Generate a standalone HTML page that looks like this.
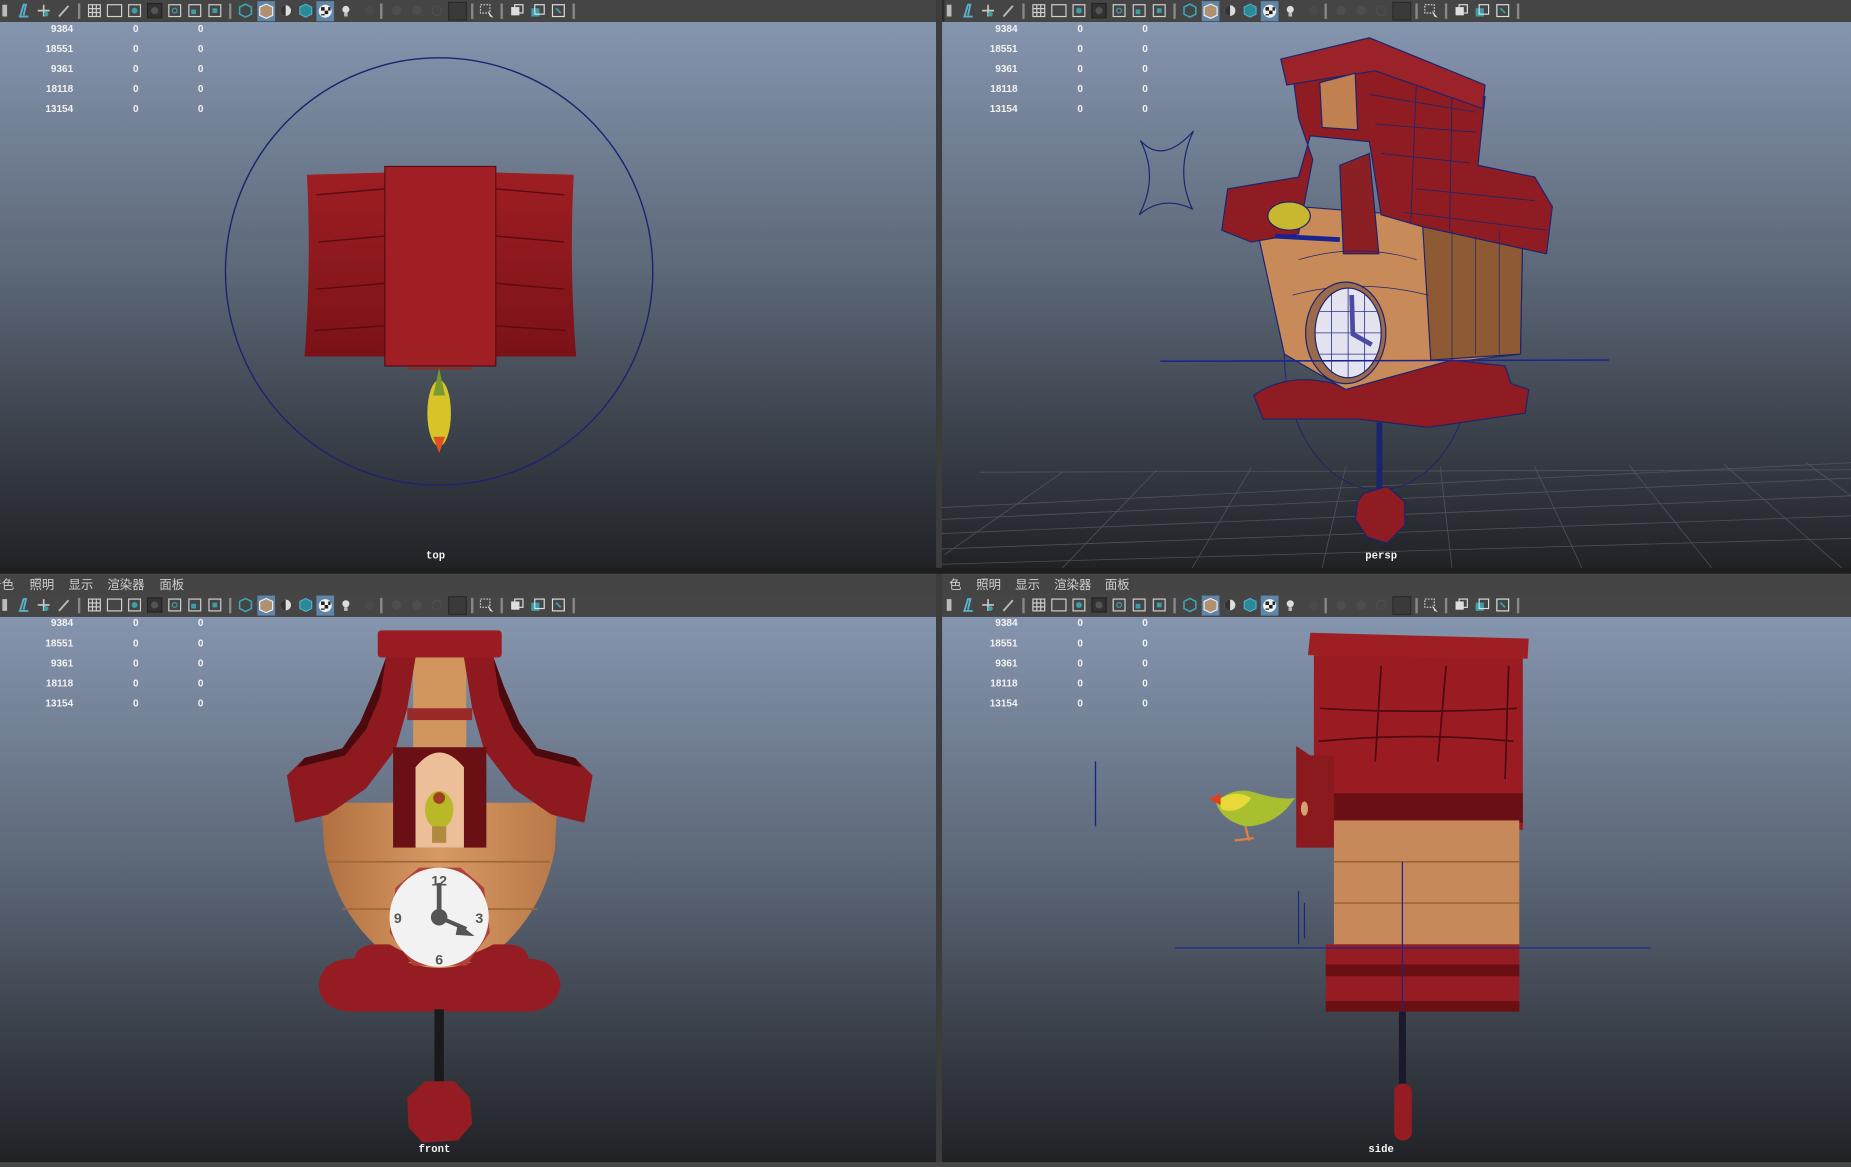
<!DOCTYPE html>
<html><head><meta charset="utf-8"><style>
html,body{margin:0;padding:0;background:#3a3a3a;overflow:hidden}
svg{display:block}
.n{font-family:"Liberation Sans",sans-serif;font-weight:bold;font-size:8.5px;fill:#f2f2f2}
.m{font-family:"Liberation Sans","Noto Sans CJK SC",sans-serif;font-size:10.5px;fill:#cfcfcf}
.lb{font-family:"Liberation Mono",monospace;font-weight:bold;font-size:9px;fill:#f4f4f4}
</style></head><body>
<svg width="1851" height="1167" viewBox="0 0 1568 988.6" preserveAspectRatio="none" xmlns="http://www.w3.org/2000/svg">
<defs>
<linearGradient id="vp" x1="0" y1="0" x2="0" y2="1">
<stop offset="0" stop-color="#8595ae"/><stop offset="0.45" stop-color="#5d6878"/><stop offset="1" stop-color="#202226"/>
</linearGradient>
<linearGradient id="wood" x1="0" y1="0" x2="1" y2="0">
<stop offset="0" stop-color="#b07040"/><stop offset="0.5" stop-color="#d89a64"/><stop offset="1" stop-color="#b87848"/>
</linearGradient>
<linearGradient id="red" x1="0" y1="0" x2="0" y2="1">
<stop offset="0" stop-color="#9e1e22"/><stop offset="1" stop-color="#7a1218"/>
</linearGradient>
<g id="tb">
<rect x="0" y="0" width="793" height="18.6" fill="#454545"/>
<rect x="2" y="4" width="4" height="10" fill="#bbb"/>
<path d="M16 14 L24 14 M17 14 L20 4 L22 4 L20 13" stroke="#5ab0c8" stroke-width="1.6" fill="none"/>
<path d="M32 9 L42 9 M37 4 L37 14" stroke="#c8c8c8" stroke-width="1.4"/><circle cx="39" cy="12" r="2" fill="#3aa0a8"/>
<path d="M50 14 L58 5" stroke="#bbb" stroke-width="1.6"/>
<rect x="66" y="3" width="2" height="13" fill="#888"/>
<g fill="none" stroke="#cfcfcf" stroke-width="1">
<rect x="75" y="4" width="10" height="10"/><path d="M78.3 4v10M81.6 4v10M75 7.3h10M75 10.6h10"/>
<rect x="91" y="4" width="12" height="10"/>
<rect x="109" y="4" width="10" height="10"/>
<rect x="143" y="4" width="10" height="10"/>
<rect x="160" y="4" width="10" height="10"/>
<rect x="177" y="4" width="10" height="10"/>
</g>
<circle cx="114" cy="9" r="2.5" fill="#3aa0a8"/>
<rect x="125" y="3" width="12" height="12" fill="#333" stroke="#222"/><circle cx="131" cy="9" r="3" fill="#555"/>
<circle cx="148" cy="9" r="2" fill="none" stroke="#3aa0a8"/>
<rect x="162" y="8" width="4" height="4" fill="#3aa0a8"/>
<rect x="180" y="7" width="4" height="4" fill="#3aa0a8"/>
<rect x="194" y="3" width="2" height="13" fill="#888"/>
<path d="M203 6 L208 3.5 L213 6 L213 12 L208 14.5 L203 12 Z" fill="none" stroke="#3aa8b8" stroke-width="1.3"/>
<rect x="218" y="1" width="15" height="17" fill="#5f86a8"/>
<path d="M220 6 L225.5 3.5 L231 6 L231 13 L225.5 15.5 L220 13 Z" fill="#b09070" stroke="#eee" stroke-width="1"/>
<circle cx="242" cy="9" r="4.5" fill="#ddd"/><path d="M242 4.5 A4.5 4.5 0 0 0 242 13.5Z" fill="#333"/>
<path d="M254 6 L259 3.5 L264 6 L264 12 L259 14.5 L254 12 Z" fill="#2a8a98" stroke="#5ac" stroke-width="1"/>
<rect x="268" y="1" width="15" height="17" fill="#5f86a8"/>
<circle cx="275.5" cy="9.5" r="5.5" fill="#eee"/><path d="M272 6h3v3h-3zM275 9h3v3h-3zM272 12h3v1h-3zM278 6h2v3h-2z" fill="#222"/>
<circle cx="293" cy="8" r="3" fill="#ddd"/><rect x="291.5" y="11" width="3" height="3" fill="#bbb"/>
<circle cx="313" cy="9" r="4" fill="#4a4a4a"/>
<rect x="322" y="3" width="2" height="13" fill="#888"/>
<circle cx="336" cy="9" r="4" fill="#4e4e4e"/><circle cx="353" cy="9" r="4" fill="#4e4e4e"/><circle cx="370" cy="9" r="4" fill="none" stroke="#4e4e4e"/>
<rect x="380" y="2" width="15" height="15" fill="#3a3a3a" stroke="#2a2a2a"/>
<rect x="399" y="3" width="2" height="13" fill="#888"/>
<rect x="407" y="4" width="8" height="7" fill="none" stroke="#ccc" stroke-dasharray="1.5 1"/><path d="M413 9 L418 15 L415 14Z" fill="#ddd"/>
<rect x="424" y="3" width="2" height="13" fill="#888"/>
<rect x="433" y="6" width="7" height="7" fill="#ddd"/><rect x="436" y="4" width="7" height="7" fill="none" stroke="#ddd"/>
<rect x="450" y="7" width="7" height="7" fill="#3aa0a8"/><rect x="453" y="4" width="8" height="8" fill="none" stroke="#ddd"/>
<rect x="468" y="4" width="10" height="10" fill="none" stroke="#ddd"/><path d="M471 7 L475 11" stroke="#3aa0a8" stroke-width="1.5"/>
<rect x="485" y="3" width="2" height="13" fill="#888"/>
</g>
<g id="nums">
<text class="n" x="62" y="27" text-anchor="end">9384</text>
<text class="n" x="62" y="44" text-anchor="end">18551</text>
<text class="n" x="62" y="61" text-anchor="end">9361</text>
<text class="n" x="62" y="78" text-anchor="end">18118</text>
<text class="n" x="62" y="95" text-anchor="end">13154</text>
<g text-anchor="middle">
<text class="n" x="115" y="27">0</text><text class="n" x="170" y="27">0</text>
<text class="n" x="115" y="44">0</text><text class="n" x="170" y="44">0</text>
<text class="n" x="115" y="61">0</text><text class="n" x="170" y="61">0</text>
<text class="n" x="115" y="78">0</text><text class="n" x="170" y="78">0</text>
<text class="n" x="115" y="95">0</text><text class="n" x="170" y="95">0</text>
</g>
</g>
</defs>

<rect width="1568" height="989" fill="#2b2b2b"/>
<rect x="0" y="18.6" width="793" height="462.4" fill="url(#vp)"/>
<rect x="798" y="18.6" width="770" height="462.4" fill="url(#vp)"/>
<rect x="0" y="522.5" width="793" height="462" fill="url(#vp)"/>
<rect x="798" y="522.5" width="770" height="462" fill="url(#vp)"/>
<rect x="793" y="0" width="5" height="989" fill="#3c3c3c"/>
<rect x="0" y="481" width="1568" height="5" fill="#1e1e1e"/>
<rect x="0" y="486" width="793" height="36.5" fill="#444"/>
<rect x="798" y="486" width="770" height="36.5" fill="#444"/>
<rect x="0" y="984.5" width="1568" height="4.1" fill="#474747"/>

<use href="#tb" x="0" y="0"/>
<use href="#tb" x="800" y="0"/>
<use href="#tb" x="0" y="503.5"/>
<use href="#tb" x="800" y="503.5"/>

<text class="m" x="-9" y="499">着色</text><text class="m" x="25" y="499">照明</text><text class="m" x="58" y="499">显示</text><text class="m" x="91" y="499">渲染器</text><text class="m" x="135" y="499">面板</text>
<text class="m" x="804" y="499">色</text><text class="m" x="827" y="499">照明</text><text class="m" x="860" y="499">显示</text><text class="m" x="893" y="499">渲染器</text><text class="m" x="936" y="499">面板</text>

<use href="#nums" x="0" y="0"/>
<use href="#nums" x="800" y="0"/>
<use href="#nums" x="0" y="503.5"/>
<use href="#nums" x="800" y="503.5"/>

<!-- TOP VIEW -->
<circle cx="372" cy="230" r="181" fill="none" stroke="#1a2470" stroke-width="1.2"/>
<path d="M260 148 L330 146 L330 302 L258 302 Q264 225 260 148Z" fill="url(#red)"/>
<path d="M416 146 L486 148 Q482 225 488 302 L416 302Z" fill="url(#red)"/>
<g stroke="#5a0c10" stroke-width="1.2" fill="none">
<path d="M268 165 L326 160 M270 205 L326 200 M268 245 L326 240 M266 280 L326 276"/>
<path d="M420 160 L478 165 M420 200 L478 205 M420 240 L478 245 M420 276 L480 280"/>
</g>
<rect x="326" y="141" width="94" height="169" fill="#a01f24" stroke="#5a0c10" stroke-width="1"/>
<path d="M345 312 L400 312" stroke="#8a3020" stroke-width="2"/>
<ellipse cx="372" cy="350" rx="10" ry="28" fill="#d8c428"/>
<path d="M367 335 L377 335 L372 312Z" fill="#7a9a30"/>
<path d="M367 370 L377 370 L372 384Z" fill="#e05020"/>
<text class="lb" x="369" y="473" text-anchor="middle">top</text>

<!-- PERSP VIEW -->
<g stroke="#555c66" stroke-width="0.7" fill="none" opacity="0.8">
<path d="M798 430 L1568 392 M798 440 L1568 405 M798 452 L1568 420 M798 465 L1568 437 M798 478 L1568 456"/>
<path d="M830 400 L1568 398 M900 400 L800 470 M980 398 L900 481 M1060 396 L1010 481 M1140 395 L1120 481 M1220 395 L1230 481 M1300 395 L1340 481 M1380 394 L1450 481 M1460 393 L1560 481 M1530 392 L1568 420"/>
</g>
<path d="M966 119 Q985 140 1011 111 Q995 145 1010 177 Q985 165 965 182 Q982 150 966 119Z" fill="none" stroke="#1a2470" stroke-width="1"/>
<ellipse cx="1168" cy="300" rx="80" ry="115" fill="none" stroke="#1a2470" stroke-width="0.8"/>
<path d="M1065 195 L1100 175 L1290 190 L1288 300 L1220 308 L1140 330 L1088 300 Z" fill="#c88a58" stroke="#1a2470" stroke-width="1"/>
<path d="M1205 188 L1290 192 L1288 300 L1212 305 Z" fill="#8e5a34" stroke="#1a2470"/>
<path d="M1095 62 L1165 50 L1258 82 L1252 140 L1300 150 L1315 175 L1310 215 L1205 192 L1170 182 L1160 120 L1110 115 L1100 150 L1040 160 L1035 195 L1060 205 L1100 198 L1112 135 L1100 100 Z" fill="#8e1c22" stroke="#1a2470" stroke-width="1"/>
<path d="M1160 80 L1250 95 M1165 105 L1250 112 M1170 130 L1245 138 M1200 160 L1300 170 M1190 180 L1310 195 M1200 65 L1195 190 M1230 80 L1228 195" stroke="#1a2470" stroke-width="0.7" fill="none"/>
<path d="M1085 50 L1160 32 L1258 72 L1256 92 L1165 60 L1090 72 Z" fill="#9a2228" stroke="#1a2470"/>
<path d="M1118 70 L1148 62 L1150 110 L1120 108 Z" fill="#c08050" stroke="#1a2470"/>
<path d="M1135 140 L1160 130 L1168 215 L1138 215 Z" fill="#8a2024" stroke="#1a2470"/>
<ellipse cx="1092" cy="183" rx="18" ry="12" fill="#c8b830" stroke="#1a2470"/>
<path d="M1080 200 L1135 203" stroke="#1a2490" stroke-width="4"/>
<g stroke="#1a2470" stroke-width="0.6" fill="none">
<path d="M1100 220 Q1150 205 1200 220 M1095 250 Q1150 235 1210 250 M1250 200 L1250 300 M1230 195 L1230 305 M1270 195 L1270 300"/>
</g>
<ellipse cx="1140" cy="282" rx="34" ry="43" fill="#9a6a4a" stroke="#1a2470"/>
<ellipse cx="1142" cy="282" rx="28" ry="38" fill="#e4e4f0" stroke="#1a2470"/>
<g stroke="#2a3090" stroke-width="0.7" fill="none"><path d="M1114 282 H1170 M1118 264 H1166 M1118 300 H1166 M1142 244 V320 M1128 248 V316 M1156 248 V316"/></g>
<path d="M1145 250 L1146 283 L1162 292" stroke="#4a4aa0" stroke-width="4" fill="none"/>
<path d="M1062 335 Q1090 315 1130 325 L1140 330 L1230 305 L1275 310 L1280 325 L1295 330 L1292 350 L1210 362 L1150 355 L1070 355 Z" fill="#8e1c22" stroke="#1a2470"/>
<path d="M983 306 L1363 305" stroke="#1a2490" stroke-width="1.3"/>
<rect x="1166" y="358" width="5" height="56" fill="#1a2470"/>
<path d="M1155 418 L1175 412 L1190 425 L1190 445 L1175 460 L1158 455 L1148 440 L1150 425Z" fill="#8e1c22" stroke="#1a2470"/>
<text class="lb" x="1170" y="473" text-anchor="middle">persp</text>

<!-- FRONT VIEW -->
<path d="M350 557 L395 557 L395 640 L350 640Z" fill="#d0965e"/>
<path d="M272 680 L472 680 L470 720 Q455 800 372 835 Q290 800 275 720 Z" fill="url(#wood)"/>
<g stroke="#a06838" stroke-width="1.5"><path d="M278 730 H466 M290 770 H455"/></g>
<path d="M327 557 L352 557 L345 600 L335 635 L310 668 L278 690 L250 697 L243 657 L258 642 L290 634 L305 612 L318 582Z" fill="#8e1a20"/>
<path d="M418 557 L393 557 L400 600 L410 635 L435 668 L467 690 L495 697 L502 657 L487 642 L455 634 L440 612 L427 582Z" fill="#8e1a20"/>
<path d="M327 557 L318 582 L305 612 L290 634 L258 642 L252 650 L292 640 L310 618 L322 590Z" fill="#4a0a0e"/>
<path d="M418 557 L427 582 L440 612 L455 634 L487 642 L493 650 L453 640 L435 618 L423 590Z" fill="#4a0a0e"/>
<rect x="320" y="534" width="105" height="23" rx="3" fill="#9a1c22"/>
<rect x="345" y="600" width="55" height="10" fill="#9a2a28"/>
<rect x="333" y="633" width="79" height="85" fill="#6a0f14"/>
<path d="M352 718 L352 650 Q372 625 393 650 L393 718Z" fill="#ecbf98"/>
<ellipse cx="372" cy="686" rx="12" ry="16" fill="#b8b828"/>
<circle cx="372" cy="676" r="5" fill="#a04020"/>
<rect x="366" y="700" width="12" height="14" fill="#b08a40"/>
<path d="M270 835 Q272 812 300 812 L325 805 Q372 835 420 805 L445 812 Q472 812 475 835 Q470 857 445 857 L300 857 Q272 857 270 835 Z" fill="#951c22"/>
<path d="M300 815 Q300 800 320 800 L330 800 Q372 825 418 800 L428 800 Q448 800 448 815Z" fill="#951c22"/>
<path d="M335 752 L355 735 L390 735 L410 752 L415 790 L395 818 L350 818 L330 790Z" fill="#b0403a"/>
<circle cx="372" cy="777" r="42" fill="#f2f2f2"/>
<g fill="#555" font-family="Liberation Sans,sans-serif" font-weight="bold" font-size="12" text-anchor="middle">
<text x="372" y="750">12</text><text x="406" y="782">3</text><text x="372" y="817">6</text><text x="337" y="782">9</text>
</g>
<path d="M370 748 L374 748 L374 777 L370 777Z" fill="#555"/>
<path d="M372 777 L395 787" stroke="#555" stroke-width="3.5"/><path d="M388 782 L402 793 L386 792Z" fill="#555"/>
<circle cx="372" cy="777" r="7" fill="#555"/>
<rect x="368" y="855" width="8" height="65" fill="#1a1a1a"/>
<path d="M360 916 L385 916 L398 930 L400 952 L388 966 L358 968 L346 955 L345 930Z" fill="#951c22"/>
<text class="lb" x="368" y="976" text-anchor="middle">front</text>

<!-- SIDE VIEW -->
<path d="M928 645 L928 700" stroke="#1a2490" stroke-width="1.2"/>
<rect x="1113" y="555" width="177" height="148" fill="#9a1c22"/>
<g stroke="#4a0a0e" stroke-width="1.4" fill="none">
<path d="M1118 600 Q1200 605 1285 600 M1117 628 Q1200 620 1282 628 M1170 564 L1165 645 M1225 564 L1218 645 M1278 564 L1275 660"/>
</g>
<rect x="1113" y="672" width="177" height="25" fill="#6a0f14"/>
<path d="M1110 536 L1295 541 L1294 558 L1108 555Z" fill="#9e1e24"/>
<path d="M1098 632 L1110 640 L1130 640 L1130 718 L1098 718Z" fill="#8a1a1e"/>
<ellipse cx="1105" cy="685" rx="3" ry="6" fill="#d8a070"/>
<rect x="1130" y="695" width="157" height="105" fill="#c8895a"/>
<path d="M1130 730 H1287 M1130 765 H1287" stroke="#9a6030" stroke-width="1.2"/>
<rect x="1123" y="800" width="164" height="57" fill="#951c22"/>
<rect x="1123" y="817" width="164" height="10" fill="#6a0f14"/>
<rect x="1123" y="848" width="164" height="9" fill="#6a0f14"/>
<path d="M995 803 L1398 803" stroke="#1a2490" stroke-width="1"/>
<path d="M1188 730 L1188 920" stroke="#1a2490" stroke-width="1"/>
<path d="M1100 755 L1100 800 M1105 765 L1105 795" stroke="#1a2490" stroke-width="1"/>
<rect x="1185" y="857" width="6" height="63" fill="#1a1a2a"/>
<rect x="1181" y="918" width="15" height="48" rx="7" fill="#951c22"/>
<path d="M1030 680 Q1045 665 1065 672 Q1085 678 1097 676 L1090 685 Q1075 700 1055 700 Q1035 695 1030 680Z" fill="#a8c030"/>
<path d="M1032 678 Q1045 668 1060 676 Q1050 690 1035 686Z" fill="#e8d838"/>
<path d="M1024 677 L1034 672 L1034 682Z" fill="#e04020"/>
<path d="M1046 712 L1062 710 M1055 700 L1058 712" stroke="#e08040" stroke-width="2"/>
<text class="lb" x="1170" y="976" text-anchor="middle">side</text>
</svg>
</body></html>
